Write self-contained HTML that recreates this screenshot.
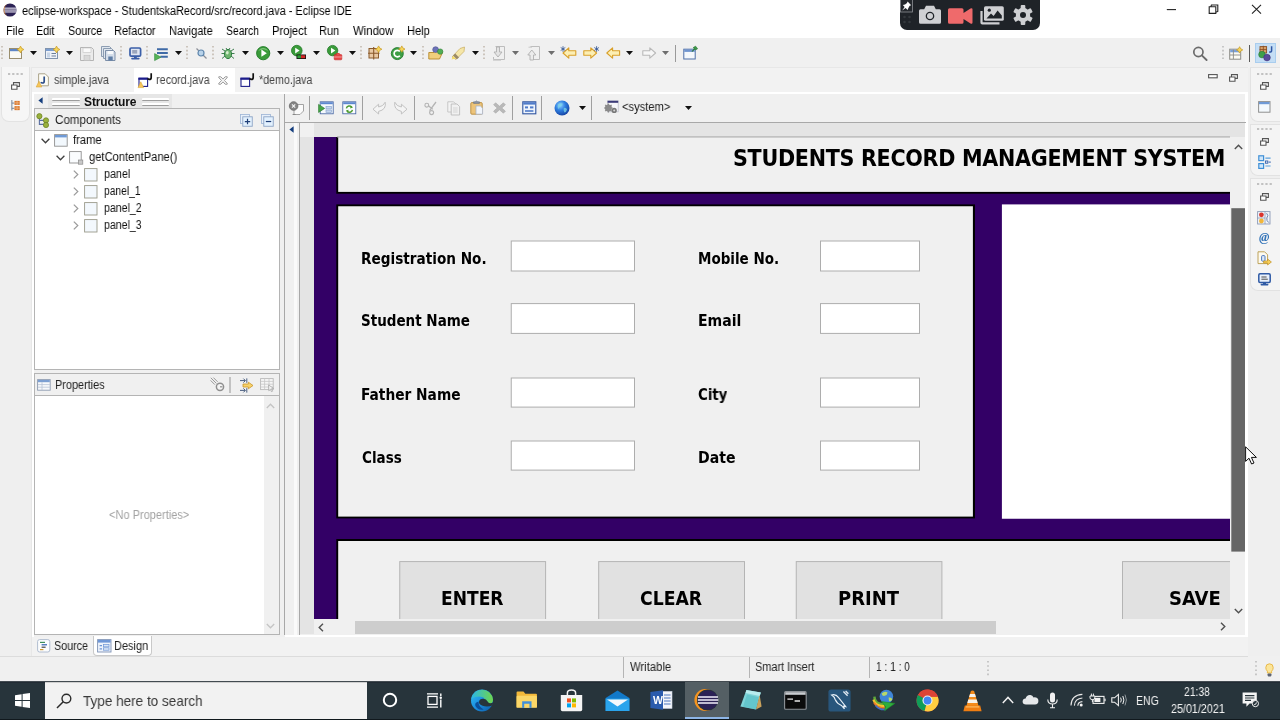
<!DOCTYPE html>
<html lang="en">
<head>
<meta charset="utf-8">
<title>eclipse-workspace - StudentskaRecord/src/record.java - Eclipse IDE</title>
<style>
*{box-sizing:border-box;margin:0;padding:0}
html,body{width:1280px;height:720px;overflow:hidden;background:#fff}
body{position:relative;font-family:"Liberation Sans",sans-serif;font-size:12px;color:#000}
.a{position:absolute}
.t{position:absolute;white-space:nowrap;line-height:1;transform-origin:0 50%;will-change:transform}
.ui{font-family:"Liberation Sans",sans-serif;font-size:12px;color:#1a1a1a}
.tb{font-family:"DejaVu Sans Condensed","DejaVu Sans","Liberation Sans",sans-serif;font-weight:bold;color:#000}
.lbl{font-size:15px}
.fld{position:absolute;background:#fff;border:1px solid #ababab;height:31px}
.btn{position:absolute;background:#e1e1e1;border:1px solid #b6b6b6;height:70px;width:147px}
.btx{font-size:19px}
svg{position:absolute;overflow:visible}
</style>
</head>
<body>
<!-- chrome -->
<div class="a" id="titlebar" style="left:0;top:0;width:1280px;height:21px;background:#fff"></div>
<div class="a" id="menubar" style="left:0;top:21px;width:1280px;height:17px;background:#fff"></div>
<div class="a" id="maintool" style="left:0;top:38px;width:1280px;height:29px;background:#f0f0f0"></div>
<div class="a" id="workbench" style="left:0;top:67px;width:1280px;height:589px;background:#efefef"></div>
<div class="a" id="statusbar" style="left:0;top:656px;width:1280px;height:26px;background:#f0f0f0"></div>
<div class="a" id="taskbar" style="left:0;top:682px;width:1280px;height:38px;background:#27343b"></div>
<!-- title -->
<svg id="eclipseicon" style="left:3px;top:3px" width="14" height="14" viewBox="0 0 14 14"><circle cx="7" cy="7" r="6.6" fill="#2c2255"/><rect x="0.6" y="4.6" width="12.8" height="1.1" fill="#e9e6f2"/><rect x="0.4" y="6.5" width="13.2" height="1.1" fill="#e9e6f2"/><rect x="0.6" y="8.4" width="12.8" height="1.1" fill="#e9e6f2"/><path d="M4 1.2A6.6 6.6 0 0 0 4 12.8A8 8 0 0 1 4 1.2Z" fill="#f7941e" opacity=".55"/></svg>
<div class="t ui" id="wtitle" style="left:21.9px;top:4.8px;font-size:12px;color:#000;transform:scaleX(0.909)">eclipse-workspace - StudentskaRecord/src/record.java - Eclipse IDE</div>
<!-- window buttons -->
<svg style="left:1166px;top:4px" width="12" height="12" viewBox="0 0 12 12"><path d="M0.8 5.6H10" stroke="#222" stroke-width="1.1" fill="none"/></svg>
<svg style="left:1208px;top:4px" width="12" height="12" viewBox="0 0 12 12"><path d="M1.2 2.8H7.8V9.4H1.2ZM2.8 2.8L3.4 1H9.8V7.4L7.8 8.2" stroke="#222" stroke-width="1.1" fill="none"/></svg>
<svg style="left:1251px;top:4px" width="12" height="12" viewBox="0 0 12 12"><path d="M1 0.8L10 9.6M10 0.8L1 9.6" stroke="#222" stroke-width="1.1" fill="none"/></svg>
<!-- recorder widget -->
<div class="a" id="recw" style="left:900px;top:-6px;width:140px;height:35.5px;background:#1f2328;border-radius:7px"></div>
<svg style="left:900px;top:0" width="140" height="30" viewBox="0 0 140 30">
  <rect x="0.5" y="-0.5" width="12" height="12.5" fill="#23272c" stroke="#8d9094" stroke-width="0.8"/>
  <path d="M7.6 1.6L11.2 5.2L9.7 5.7L8.4 7.9L7.6 10L5.6 8L2.2 10.6L4.6 7L2.8 5.1L5 4.4L7 3.1Z" fill="#fff"/>
  <g fill="#33373c"><circle cx="4.5" cy="17" r="1.3"/><circle cx="9.5" cy="17" r="1.3"/><circle cx="4.5" cy="22" r="1.3"/><circle cx="9.5" cy="22" r="1.3"/></g>
  <!-- camera -->
  <path d="M20.5 9.2H24.2L26 5.8H34L35.8 9.2H39.5Q41 9.2 41 10.7V22.2Q41 23.7 39.5 23.7H20.5Q19 23.7 19 22.2V10.7Q19 9.2 20.5 9.2Z" fill="#cfd0d3"/>
  <circle cx="30" cy="16" r="4.3" fill="#1f2328"/><circle cx="30" cy="16" r="3" fill="#cfd0d3"/>
  <!-- video -->
  <path d="M49.5 8.2H62Q63.5 8.2 63.5 9.7V13L70.5 8.6Q72.5 7.6 72.5 9.6V22.4Q72.5 24.4 70.5 23.4L63.5 19V22.2Q63.5 23.7 62 23.7H49.5Q48 23.7 48 22.2V9.7Q48 8.2 49.5 8.2Z" fill="#ef6a6b"/>
  <!-- gallery -->
  <path d="M81.5 11V22.6Q81.5 23.4 82.3 23.4H99.5" fill="none" stroke="#cfd0d3" stroke-width="2.2"/>
  <rect x="84" y="6.2" width="19.8" height="14.6" rx="1.6" fill="#cfd0d3"/>
  <path d="M86.5 18.6L91 13.6L93.6 16L97.6 10.6L101.8 15.6V18.6Z" fill="#1f2328"/><circle cx="89.3" cy="10.2" r="1.6" fill="#1f2328"/>
  <!-- gear -->
  <g transform="translate(123 15)"><g fill="#cfd0d3"><circle r="7.2"/><rect x="-2.3" y="-10" width="4.6" height="20" rx="1"/><rect x="-2.3" y="-10" width="4.6" height="20" rx="1" transform="rotate(60)"/><rect x="-2.3" y="-10" width="4.6" height="20" rx="1" transform="rotate(120)"/></g><circle r="3" fill="#1f2328"/></g>
</svg>
<!-- menu -->
<div class="t ui" id="m1" style="left:6.0px;top:24.8px;color:#000;transform:scaleX(0.919)">File</div>
<div class="t ui" id="m2" style="left:35.6px;top:24.8px;color:#000;transform:scaleX(0.895)">Edit</div>
<div class="t ui" id="m3" style="left:68.0px;top:24.8px;color:#000;transform:scaleX(0.901)">Source</div>
<div class="t ui" id="m4" style="left:114.1px;top:24.8px;color:#000;transform:scaleX(0.918)">Refactor</div>
<div class="t ui" id="m5" style="left:168.8px;top:24.8px;color:#000;transform:scaleX(0.922)">Navigate</div>
<div class="t ui" id="m6" style="left:226.0px;top:24.8px;color:#000;transform:scaleX(0.869)">Search</div>
<div class="t ui" id="m7" style="left:272.2px;top:24.8px;color:#000;transform:scaleX(0.933)">Project</div>
<div class="t ui" id="m8" style="left:319.4px;top:24.8px;color:#000;transform:scaleX(0.918)">Run</div>
<div class="t ui" id="m9" style="left:353.1px;top:24.8px;color:#000;transform:scaleX(0.946)">Window</div>
<div class="t ui" id="m10" style="left:407.0px;top:24.8px;color:#000;transform:scaleX(0.922)">Help</div>
<!-- toolbar -->
<svg style="left:1px;top:46px" width="2" height="15" viewBox="0 0 2 15"><path d="M1 0V15" stroke="#bdb2a6" stroke-width="1.4" stroke-dasharray="1.6 2.2" fill="none"/></svg>
<svg style="left:9px;top:46px" width="15" height="15" viewBox="0 0 15 15"><rect x="0.5" y="2.5" width="12" height="10" fill="#fbfaf3" stroke="#9a8e6e"/><rect x="1" y="3" width="11" height="2.2" fill="#5f86c5"/><path d="M11.5 0.10000000000000009L12.69 2.31L14.9 3.5L12.69 4.6899999999999995L11.5 6.9L10.31 4.6899999999999995L8.1 3.5L10.31 2.31Z" fill="#f6d55c" stroke="#c99a1f" stroke-width="0.7"/></svg>
<svg style="left:29.9px;top:50.6px" width="7" height="4" viewBox="0 0 7 4"><path d="M0 0H7L3.5 4Z" fill="#111"/></svg>
<svg style="left:45px;top:46px" width="15" height="15" viewBox="0 0 15 15"><rect x="0.5" y="2.5" width="12" height="10" fill="#eef2f8" stroke="#8093ad"/><rect x="1" y="3" width="11" height="2" fill="#7c9ed0"/><rect x="2" y="6.5" width="3" height="5" fill="#c7d5e8"/><path d="M6.5 7.5H11M6.5 10H11" stroke="#6c7f99" stroke-width="1"/><path d="M11.5 0.10000000000000009L12.69 2.31L14.9 3.5L12.69 4.6899999999999995L11.5 6.9L10.31 4.6899999999999995L8.1 3.5L10.31 2.31Z" fill="#f6d55c" stroke="#c99a1f" stroke-width="0.7"/></svg>
<svg style="left:65.5px;top:50.6px" width="7" height="4" viewBox="0 0 7 4"><path d="M0 0H7L3.5 4Z" fill="#111"/></svg>
<svg style="left:80px;top:46.5px" width="14" height="14" viewBox="0 0 14 14"><path d="M0.5 0.5H11.5L13.5 2.5V13.5H0.5Z" fill="#ececec" stroke="#b4b4b4"/><rect x="3" y="1" width="8" height="4.5" fill="#fafafa" stroke="#c4c4c4" stroke-width=".6"/><rect x="4" y="8.5" width="6" height="5" fill="#d9d9d9" stroke="#bcbcbc" stroke-width=".6"/></svg>
<svg style="left:101px;top:46px" width="15" height="15" viewBox="0 0 15 15"><path d="M0.5 0.5H8.5L10 2V10.5H0.5Z" fill="#dfe6ee" stroke="#8d9db2"/><path d="M2.5 2.5H10.5L12 4V12.5H2.5Z" fill="#dfe6ee" stroke="#8d9db2"/><path d="M4.5 4.5H12.5L14 6V14.5H4.5Z" fill="#d5deea" stroke="#7d8fa8"/><rect x="6.5" y="5" width="5.5" height="3" fill="#f7f9fb"/><rect x="7.3" y="10.5" width="4.4" height="4" fill="#5f7ea6"/></svg>
<svg style="left:120px;top:46px" width="2" height="15" viewBox="0 0 2 15"><path d="M1 0V15" stroke="#bdb2a6" stroke-width="1.4" stroke-dasharray="1.6 2.2" fill="none"/></svg>
<svg style="left:128.5px;top:46.5px" width="13" height="13" viewBox="0 0 13 13"><rect x="1" y="1" width="10.6" height="8.2" rx="1.2" fill="#dfe6f2" stroke="#3b5fa8" stroke-width="1.7"/><rect x="3.2" y="3" width="5" height="3.6" fill="#9aa6bd"/><rect x="5" y="9.6" width="2.8" height="1.6" fill="#3b5fa8"/><rect x="2.2" y="10.8" width="8.4" height="1.7" rx=".8" fill="#3b5fa8"/></svg>
<svg style="left:146px;top:46px" width="2" height="15" viewBox="0 0 2 15"><path d="M1 0V15" stroke="#bdb2a6" stroke-width="1.4" stroke-dasharray="1.6 2.2" fill="none"/></svg>
<svg style="left:154px;top:46.5px" width="15" height="14" viewBox="0 0 15 14"><path d="M3 2.2H13.8M3 6H13.8M6.4 9.8H13.8" stroke="#3f6aa6" stroke-width="2"/><path d="M0.6 6.6L7 10.2L0.6 13.6Z" fill="#56b356" stroke="#2e8a3a" stroke-width=".6"/></svg>
<svg style="left:174.8px;top:50.6px" width="7" height="4" viewBox="0 0 7 4"><path d="M0 0H7L3.5 4Z" fill="#111"/></svg>
<svg style="left:186px;top:46px" width="2" height="15" viewBox="0 0 2 15"><path d="M1 0V15" stroke="#bdb2a6" stroke-width="1.4" stroke-dasharray="1.6 2.2" fill="none"/></svg>
<svg style="left:196px;top:48px" width="11" height="11" viewBox="0 0 11 11"><path d="M0.5 0.5L10.5 10.5" stroke="#8b8f98" stroke-width="1.2"/><circle cx="5" cy="5" r="3" fill="#b9d3ea" stroke="#5e86ad" stroke-width="1.2"/></svg>
<svg style="left:212.4px;top:46px" width="2" height="15" viewBox="0 0 2 15"><path d="M1 0V15" stroke="#bdb2a6" stroke-width="1.4" stroke-dasharray="1.6 2.2" fill="none"/></svg>
<svg style="left:221px;top:46px" width="14" height="14" viewBox="0 0 14 14"><g stroke="#3f7f4f" stroke-width="1" fill="none"><path d="M1 3L4 5M13 3L10 5M0.5 7.5H3.5M13.5 7.5H10.5M1 12.5L4 10M13 12.5L10 10M5 2L6 3.5M9 2L8 3.5"/></g><ellipse cx="7" cy="8" rx="3.6" ry="4.6" fill="#6fb56f" stroke="#2e7d42"/><ellipse cx="6.3" cy="6.8" rx="1.4" ry="1.8" fill="#d6efd0"/></svg>
<svg style="left:241.5px;top:50.6px" width="7" height="4" viewBox="0 0 7 4"><path d="M0 0H7L3.5 4Z" fill="#111"/></svg>
<svg style="left:256px;top:46px" width="15" height="15" viewBox="0 0 15 15"><circle cx="7.2" cy="7.2" r="6.6" fill="#3a9b3a" stroke="#1f7a26" stroke-width=".9"/><path d="M2.4 5A5.4 5.4 0 0 1 12 5A8 8 0 0 0 2.4 5Z" fill="#8fd18a" opacity=".8"/><path d="M5.4 3.6L10.8 7.2L5.4 10.8Z" fill="#fff"/></svg>
<svg style="left:276.8px;top:50.6px" width="7" height="4" viewBox="0 0 7 4"><path d="M0 0H7L3.5 4Z" fill="#111"/></svg>
<svg style="left:291px;top:44.5px" width="16" height="15" viewBox="0 0 16 15"><circle cx="5.8" cy="5.6" r="5.3" fill="#3a9b3a" stroke="#1f7a26" stroke-width=".8"/><path d="M4.2 2.8L8.6 5.6L4.2 8.4Z" fill="#fff"/><rect x="5.5" y="9.5" width="9.5" height="4.5" fill="#111"/><rect x="6.3" y="10.3" width="3.6" height="2.9" fill="#2fa23a"/><rect x="10" y="10.3" width="4.2" height="2.9" fill="#d32525"/></svg>
<svg style="left:312.8px;top:50.6px" width="7" height="4" viewBox="0 0 7 4"><path d="M0 0H7L3.5 4Z" fill="#111"/></svg>
<svg style="left:327px;top:44.5px" width="17" height="16" viewBox="0 0 17 16"><circle cx="5.6" cy="5.6" r="5.2" fill="#3a9b3a" stroke="#1f7a26" stroke-width=".8"/><path d="M4 2.8L8.4 5.6L4 8.4Z" fill="#fff"/><path d="M9.4 9.6V8.6H12.4V9.6" fill="none" stroke="#d33" stroke-width="1"/><rect x="7.2" y="9.6" width="7.6" height="5.2" rx=".8" fill="#e54545" stroke="#c62828" stroke-width=".6"/><path d="M7.2 12H14.8" stroke="#f7b5b5" stroke-width=".8"/></svg>
<svg style="left:348.5px;top:50.6px" width="7" height="4" viewBox="0 0 7 4"><path d="M0 0H7L3.5 4Z" fill="#111"/></svg>
<svg style="left:359.7px;top:46px" width="2" height="15" viewBox="0 0 2 15"><path d="M1 0V15" stroke="#bdb2a6" stroke-width="1.4" stroke-dasharray="1.6 2.2" fill="none"/></svg>
<svg style="left:368px;top:46px" width="14" height="14" viewBox="0 0 14 14"><rect x="1" y="2.5" width="9.5" height="9.5" fill="#e9c9a4" stroke="#8a5a2b" stroke-width="1"/><path d="M5.7 1V13.5M0 7.2H11.5" stroke="#8a5a2b" stroke-width="1.1"/><path d="M10.6 -0.09999999999999964L11.754999999999999 2.0450000000000004L13.899999999999999 3.2L11.754999999999999 4.355L10.6 6.5L9.445 4.355L7.3 3.2L9.445 2.0450000000000004Z" fill="#f6d55c" stroke="#c99a1f" stroke-width="0.7"/></svg>
<svg style="left:391px;top:46px" width="14" height="14" viewBox="0 0 14 14"><circle cx="6.3" cy="7.6" r="6" fill="#3d9e45" stroke="#237a2d" stroke-width=".9"/><path d="M8.9 5.4A3.3 3.3 0 1 0 8.9 9.8" fill="none" stroke="#fff" stroke-width="1.7"/><path d="M10.8 -0.10000000000000009L11.92 1.9800000000000002L14.0 3.1L11.92 4.22L10.8 6.300000000000001L9.680000000000001 4.22L7.6000000000000005 3.1L9.680000000000001 1.9800000000000002Z" fill="#f6d55c" stroke="#c99a1f" stroke-width="0.7"/></svg>
<svg style="left:410.3px;top:50.6px" width="7" height="4" viewBox="0 0 7 4"><path d="M0 0H7L3.5 4Z" fill="#111"/></svg>
<svg style="left:421.6px;top:46px" width="2" height="15" viewBox="0 0 2 15"><path d="M1 0V15" stroke="#bdb2a6" stroke-width="1.4" stroke-dasharray="1.6 2.2" fill="none"/></svg>
<svg style="left:428px;top:46px" width="16" height="14" viewBox="0 0 16 14"><path d="M0.8 6.5H6L8 4.5H13L14.5 6.5L11.5 13H0.8Z" fill="#f0cf7c" stroke="#b5892a" stroke-width=".9"/><circle cx="7.6" cy="3.6" r="2.9" fill="#6c73b8" stroke="#4a4f8e" stroke-width=".6"/><circle cx="12.2" cy="5.6" r="2.7" fill="#4fae55" stroke="#2f7f38" stroke-width=".6"/></svg>
<svg style="left:451px;top:46px" width="15" height="14" viewBox="0 0 15 14"><path d="M1 11L9 2.5L13.5 1L13 5.5L5 13.5Z" fill="#f5e6a8" stroke="#cbb36a" stroke-width=".8"/><path d="M4.2 7.5L8 11.4L5.8 13.2L2 9.5Z" fill="#9a8a6a"/><path d="M0.5 13.5L2.2 10.2L4.6 12.6Z" fill="#f6dd66"/></svg>
<svg style="left:472.0px;top:50.6px" width="7" height="4" viewBox="0 0 7 4"><path d="M0 0H7L3.5 4Z" fill="#111"/></svg>
<svg style="left:483.4px;top:46px" width="2" height="15" viewBox="0 0 2 15"><path d="M1 0V15" stroke="#bdb2a6" stroke-width="1.4" stroke-dasharray="1.6 2.2" fill="none"/></svg>
<svg style="left:492px;top:45.5px" width="14" height="15" viewBox="0 0 14 15"><path d="M3.5 0.5H12.5V13.5H1.5V11" fill="#f0f0f0" stroke="#bdbdbd"/><path d="M4.5 1V6H2L6 11L10 6H7.5V1Z" fill="#e4e4e4" stroke="#b0b0b0" stroke-width=".9"/><path d="M1 14.2H9" stroke="#c8c8c8"/></svg>
<svg style="left:512.2px;top:50.6px" width="7" height="4" viewBox="0 0 7 4"><path d="M0 0H7L3.5 4Z" fill="#6e6e6e"/></svg>
<svg style="left:527px;top:45.5px" width="14" height="15" viewBox="0 0 14 15"><path d="M3.5 0.5H12.5V13.5H5" fill="#f0f0f0" stroke="#bdbdbd"/><path d="M3 14V9H0.8L4.8 4L8.8 9H6.5V14Z" fill="#ececec" stroke="#b0b0b0" stroke-width=".9"/><path d="M1.5 1.2H5" stroke="#c8c8c8"/></svg>
<svg style="left:547.8px;top:50.6px" width="7" height="4" viewBox="0 0 7 4"><path d="M0 0H7L3.5 4Z" fill="#6e6e6e"/></svg>
<svg style="left:561px;top:46px" width="16" height="14" viewBox="0 0 16 14"><path d="M2.0 7L7.8 1.8V4.8H14.799999999999999V9.2H7.8V12.2Z" fill="#fcefb4" stroke="#d9a02a" stroke-width="1.1" stroke-linejoin="round"/><path d="M2 0.20000000000000018V5.8M-0.2999999999999998 1.5L4.3 4.5M-0.2999999999999998 4.5L4.3 1.5" stroke="#2c4f8f" stroke-width=".8"/></svg>
<svg style="left:583px;top:46px" width="16" height="14" viewBox="0 0 16 14"><path d="M13.6 7L7.8 1.8V4.8H0.8V9.2H7.8V12.2Z" fill="#fcefb4" stroke="#d9a02a" stroke-width="1.1" stroke-linejoin="round"/><path d="M13.6 0.20000000000000018V5.8M11.3 1.5L15.899999999999999 4.5M11.3 4.5L15.899999999999999 1.5" stroke="#2c4f8f" stroke-width=".8"/></svg>
<svg style="left:605.5px;top:46px" width="15" height="14" viewBox="0 0 15 14"><path d="M0.8 7L6.6 1.8V4.8H13.6V9.2H6.6V12.2Z" fill="#fcefb4" stroke="#d9a02a" stroke-width="1.1" stroke-linejoin="round"/></svg>
<svg style="left:626.2px;top:50.6px" width="7" height="4" viewBox="0 0 7 4"><path d="M0 0H7L3.5 4Z" fill="#111"/></svg>
<svg style="left:641.5px;top:46px" width="15" height="14" viewBox="0 0 15 14"><path d="M13.6 7L7.8 1.8V4.8H0.8V9.2H7.8V12.2Z" fill="#f7f7f7" stroke="#b9b9b9" stroke-width="1.1" stroke-linejoin="round"/></svg>
<svg style="left:662.2px;top:50.6px" width="7" height="4" viewBox="0 0 7 4"><path d="M0 0H7L3.5 4Z" fill="#6e6e6e"/></svg>
<div class="a" style="left:674.5px;top:45px;width:1px;height:17px;background:#9a9a9a"></div>
<svg style="left:683px;top:46px" width="15" height="14" viewBox="0 0 15 14"><rect x="0.8" y="3.2" width="11.4" height="9.8" fill="#f4f8fc" stroke="#4d6fa8" stroke-width="1"/><rect x="1.2" y="3.6" width="10.6" height="2.3" fill="#6f94cf"/><path d="M9 5.6L11.2 2.4L10.2 1.6L12.6 0.2L14.6 2.8L12.4 4L11.8 3.2Z" fill="#3d9a48" stroke="#23702d" stroke-width=".6"/></svg>
<svg style="left:1192px;top:45px" width="17" height="17" viewBox="0 0 17 17"><circle cx="6.4" cy="7" r="4.6" fill="none" stroke="#6b6b6b" stroke-width="1.7"/><path d="M9.8 10.4L14.6 15" stroke="#6b6b6b" stroke-width="1.9" stroke-linecap="round"/></svg>
<svg style="left:1222px;top:46px" width="2" height="15" viewBox="0 0 2 15"><path d="M1 0V15" stroke="#b5b5b5" stroke-width="1.4" stroke-dasharray="1.6 2.2" fill="none"/></svg>
<svg style="left:1229px;top:46.5px" width="14" height="13" viewBox="0 0 14 13"><rect x="0.7" y="2.2" width="11" height="10" fill="#fdfcf4" stroke="#8b8b86" stroke-width="1"/><rect x="1.2" y="2.7" width="10" height="2.6" fill="#7ba0d8"/><path d="M4.4 2.7V12M1 8H11.6" stroke="#8b8b86" stroke-width=".9"/><path d="M10.6 -0.30000000000000027L11.719999999999999 1.78L13.8 2.9L11.719999999999999 4.02L10.6 6.1L9.48 4.02L7.3999999999999995 2.9L9.48 1.78Z" fill="#f6d55c" stroke="#c99a1f" stroke-width="0.7"/></svg>
<div class="a" style="left:1249px;top:45px;width:1px;height:17px;background:#5a5a5a"></div>
<div class="a" style="left:1255px;top:43px;width:21px;height:20px;background:#c4def5;border:1px solid #a9cdee"></div>
<svg style="left:1257px;top:45px" width="18" height="17" viewBox="0 0 18 17"><rect x="3" y="1.6" width="6.6" height="6.4" fill="#d9a26c" stroke="#8a4f22" stroke-width=".9"/><path d="M6.3 0.8V8.4M2.6 4.6H10" stroke="#8a4f22" stroke-width=".9"/><path d="M14.6 1.2V5.4Q14.6 7.4 12.2 7" fill="none" stroke="#2e55a3" stroke-width="1.5"/><circle cx="5" cy="9.6" r="3.3" fill="#3f9f4b" stroke="#2a7a35" stroke-width=".6"/><circle cx="10" cy="12.6" r="3.3" fill="#5a4a9c" stroke="#3e3278" stroke-width=".6"/></svg>
<!-- editor -->
<!-- left trim strip -->
<div class="a" style="left:1px;top:67px;width:29px;height:55px;background:#f6f6f6;border:1px solid #e3e3e3;border-top:none;border-radius:0 0 8px 8px"></div>
<svg style="left:8px;top:73px" width="16" height="2" viewBox="0 0 16 2"><path d="M0 1H16" stroke="#8d8d8d" stroke-width="1.2" stroke-dasharray="2.2 2" fill="none"/></svg>
<svg style="left:10.5px;top:81.5px" width="9" height="8" viewBox="0 0 9 8"><path d="M2.5 0.6H8.4V4.4H2.5Z" fill="#fff" stroke="#555" stroke-width="1.1"/><path d="M0.6 3H6V7.2H0.6Z" fill="#fff" stroke="#555" stroke-width="1.1"/></svg>
<svg style="left:11px;top:100.3px" width="9.6" height="11.4" viewBox="0 0 11 13"><path d="M1 0V12M1 3.5H4M1 9.5H4" stroke="#6f7f95" stroke-width="1.1" fill="none"/><rect x="4" y="1" width="6" height="4.6" fill="#d9762b"/><rect x="4" y="7" width="6" height="4.6" fill="#d9762b"/><path d="M4 3.3H10M4 9.3H10M7 1V5.6M7 7V11.6" stroke="#f3c59a" stroke-width=".7"/></svg>
<!-- editor stack frame -->
<div class="a" style="left:31px;top:67px;width:1px;height:589px;background:#e7e7e7"></div>
<div class="a" id="edframe" style="left:32px;top:67px;width:1216px;height:590px;background:#f0f0f0;border-left:2px solid #fff"></div>
<div class="a" id="tabrow" style="left:32px;top:67px;width:1216px;height:25px;background:#f2f2f2;border-top:1px solid #e7e7e7"></div>
<div class="a" style="left:32px;top:92px;width:1216px;height:2px;background:#fff"></div>
<div class="a" style="left:1245px;top:94px;width:3px;height:543px;background:#fff"></div>
<div class="a" style="left:285px;top:635px;width:963px;height:2px;background:#fff"></div>
<div class="a" id="activetab" style="left:133.5px;top:67.5px;width:101.5px;height:26px;background:#fff"></div>
<!-- tab icons -->
<svg style="left:36px;top:72.5px" width="13" height="15" viewBox="0 0 13 15"><path d="M2.6 0.8H9.2L12.4 4V12.8H2.6Z" fill="#fdfcf6" stroke="#a39b7f" stroke-width=".9"/><path d="M8.2 3.6V8.2Q8.2 10 6.4 10Q5.4 10 4.8 9.2" fill="none" stroke="#2d4e8a" stroke-width="1.7"/><path d="M0.2 14L3 8.2L5.8 14Z" fill="#f7c65a" stroke="#d9a63a" stroke-width=".6"/></svg>
<div class="t ui" id="tab1" style="left:53.5px;top:74.0px;color:#444;transform:scaleX(0.917)">simple.java</div>
<svg style="left:138px;top:73px" width="15" height="15" viewBox="0 0 15 15"><rect x="1" y="5.4" width="8.6" height="8" fill="#fff" stroke="#20208a" stroke-width="1.1"/><rect x="0.4" y="4.6" width="9.8" height="2.2" fill="#1c1c8c"/><path d="M13.2 0.2V4.4Q13.2 6.4 11.2 6.4Q10 6.4 9.4 5.6" fill="none" stroke="#111" stroke-width="1.7"/><path d="M0 14.6L2.8 8.8L5.6 14.6Z" fill="#f7c65a" stroke="#d9a63a" stroke-width=".6"/></svg>
<div class="t ui" id="tab2" style="left:156.4px;top:74.0px;color:#444;transform:scaleX(0.904)">record.java</div>
<svg style="left:218px;top:76px" width="10" height="9" viewBox="0 0 10 9"><path d="M0.8 0.8H2.8L5 3.2L7.2 0.8H9.2V1.6L6.4 4.5L9.2 7.4V8.2H7.2L5 5.8L2.8 8.2H0.8V7.4L3.6 4.5L0.8 1.6Z" fill="#fff" stroke="#8a8a8a" stroke-width=".9"/></svg>
<svg style="left:239.5px;top:73px" width="15" height="15" viewBox="0 0 15 15"><rect x="1" y="5.4" width="8.6" height="8" fill="#fff" stroke="#20208a" stroke-width="1.1"/><rect x="0.4" y="4.6" width="9.8" height="2.2" fill="#1c1c8c"/><path d="M13.2 0.2V4.4Q13.2 6.4 11.2 6.4Q10 6.4 9.4 5.6" fill="none" stroke="#111" stroke-width="1.7"/></svg>
<div class="t ui" id="tab3" style="left:258.6px;top:74.0px;color:#444;transform:scaleX(0.890)">*demo.java</div>
<!-- min / max of editor stack -->
<svg style="left:1208px;top:74px" width="10" height="5" viewBox="0 0 10 5"><rect x="0.6" y="0.6" width="8.6" height="3.2" fill="#fff" stroke="#555" stroke-width="1.1"/></svg>
<svg style="left:1229px;top:74px" width="9" height="8" viewBox="0 0 9 8"><path d="M2.5 0.6H8.4V4.4H2.5Z" fill="#fff" stroke="#555" stroke-width="1.1"/><path d="M0.6 3H6V7.2H0.6Z" fill="#fff" stroke="#555" stroke-width="1.1"/></svg>
<!-- design toolbar (palette/actions) -->
<div class="a" style="left:284px;top:94px;width:1px;height:541px;background:#a8a8a8"></div>
<div class="a" style="left:285px;top:122px;width:961px;height:1px;background:#a8a8a8"></div>
<div class="a" style="left:298.5px;top:122px;width:1px;height:513px;background:#a8a8a8"></div>
<div class="a" style="left:294px;top:123px;width:3px;height:512px;background:#fafafa"></div>
<svg style="left:288.5px;top:126px" width="5" height="7" viewBox="0 0 5 7"><path d="M4.6 0.2V6.8L0.4 3.5Z" fill="#153e7e"/></svg>
<!-- dtool -->
<svg style="left:288.5px;top:100.5px" width="16" height="15" viewBox="0 0 16 15"><path d="M5 3.5H14.5V10L11 13.5H5Z" fill="#fbfbfb" stroke="#9a9a9a" stroke-width=".9"/><circle cx="4.6" cy="5" r="4.3" fill="#858585" stroke="#6a6a6a" stroke-width=".8"/><path d="M3 3.4L6.2 6.6M6.2 3.4L3 6.6" stroke="#f4f4f4" stroke-width="1.2"/><path d="M3.6 13.5H6.6" stroke="#888" stroke-width="1"/></svg>
<div class="a" style="left:309.0px;top:96px;width:1px;height:24px;background:#a0a0a0"></div>
<svg style="left:318px;top:100.5px" width="16" height="14" viewBox="0 0 16 14"><rect x="2.2" y="0.8" width="13" height="12" fill="#f4f8fd" stroke="#3f5f9f" stroke-width=".8"/><rect x="2.6" y="1.2" width="12.2" height="2" fill="#5c87cf"/><rect x="8" y="5.5" width="5.4" height="2.4" fill="#c5d5ee" stroke="#7f9cc8" stroke-width=".6"/><rect x="8" y="9" width="5.4" height="2.4" fill="#c5d5ee" stroke="#7f9cc8" stroke-width=".6"/><path d="M0.6 3.4L6.6 7.4L0.6 11.4Z" fill="#46a546" stroke="#2d7d33" stroke-width=".7"/></svg>
<svg style="left:341.5px;top:100.5px" width="15" height="14" viewBox="0 0 15 14"><rect x="0.8" y="0.8" width="13" height="12" fill="#fbfdff" stroke="#3f5f9f" stroke-width=".8"/><rect x="1.2" y="1.2" width="12.2" height="2" fill="#5c87cf"/><path d="M4.4 7.4A3 3 0 0 1 9.8 6.2M10.4 8.8A3 3 0 0 1 5 10" fill="none" stroke="#4c9a2f" stroke-width="1.5"/><path d="M8.6 4.6L11 6.6L8.2 7.4ZM6 11.6L3.8 9.6L6.6 8.8Z" fill="#4c9a2f"/></svg>
<div class="a" style="left:361.8px;top:96px;width:1px;height:24px;background:#a0a0a0"></div>
<svg style="left:371.5px;top:100.5px" width="15" height="14" viewBox="0 0 15 14"><path d="M1 8.2L6.6 3.2V6Q11.4 5.4 13.2 1.2Q14.6 8.6 6.6 10.4V13Z" fill="#f4f4f4" stroke="#c2c2c2" stroke-width="1" stroke-linejoin="round"/></svg>
<svg style="left:393px;top:100.5px" width="15" height="14" viewBox="0 0 15 14"><path d="M14 8.2L8.4 3.2V6Q3.6 5.4 1.8 1.2Q0.4 8.6 8.4 10.4V13Z" fill="#f4f4f4" stroke="#c2c2c2" stroke-width="1" stroke-linejoin="round"/></svg>
<div class="a" style="left:413.7px;top:96px;width:1px;height:24px;background:#a0a0a0"></div>
<svg style="left:424px;top:100.5px" width="14" height="15" viewBox="0 0 14 15"><path d="M12 1L5.6 9.6M4 4.4L8.8 8.2" stroke="#b4b4b4" stroke-width="1.3" fill="none"/><circle cx="2.8" cy="4.2" r="1.9" fill="none" stroke="#b4b4b4" stroke-width="1.1"/><circle cx="7.6" cy="11.6" r="2" fill="none" stroke="#b4b4b4" stroke-width="1.1"/></svg>
<svg style="left:446.5px;top:100.5px" width="14" height="15" viewBox="0 0 14 15"><path d="M0.8 0.8H6.6L8.6 2.8V11H0.8Z" fill="#f4f4f4" stroke="#c2c2c2" stroke-width=".9"/><path d="M4.2 3H10L12.6 5.6V14H4.2Z" fill="#f1f1f1" stroke="#bcbcbc" stroke-width=".9"/><path d="M6 7H10.6M6 9H10.6M6 11H10.6" stroke="#cfcfcf" stroke-width=".8"/></svg>
<svg style="left:469.5px;top:100px" width="14" height="15" viewBox="0 0 14 15"><rect x="0.8" y="2.6" width="11.4" height="11.6" rx="1" fill="#edc47a" stroke="#b98d3e" stroke-width=".9"/><path d="M3.6 3.4V1.8H5.2Q6.4 0 7.8 1.8H9.4V3.4Z" fill="#8e97a6" stroke="#6c7585" stroke-width=".6"/><path d="M6 6H10.4L12.6 8.2V14.2H6Z" fill="#f1f5fb" stroke="#a9b4c6" stroke-width=".8"/></svg>
<svg style="left:493px;top:101.5px" width="13" height="12" viewBox="0 0 13 12"><path d="M2.6 0.8L6.5 4.2L10.4 0.8L12.4 2.8L8.8 6L12.4 9.2L10.4 11.2L6.5 7.8L2.6 11.2L0.6 9.2L4.2 6L0.6 2.8Z" fill="#b9b9b9" stroke="#a7a7a7" stroke-width=".6"/></svg>
<div class="a" style="left:511.9px;top:96px;width:1px;height:24px;background:#a0a0a0"></div>
<svg style="left:522px;top:100.5px" width="15" height="14" viewBox="0 0 15 14"><rect x="0.8" y="0.8" width="13" height="12" fill="#eef4fc" stroke="#2f55a0" stroke-width="1.1"/><rect x="1.2" y="1.2" width="12.2" height="2.4" fill="#4f7bc9"/><rect x="3" y="5.4" width="3" height="2" fill="#4f7bc9"/><rect x="8" y="5.4" width="3.4" height="2" fill="#4f7bc9"/><path d="M3 10H11.4" stroke="#4f7bc9" stroke-width="1.6"/></svg>
<div class="a" style="left:541.2px;top:96px;width:1px;height:24px;background:#a0a0a0"></div>
<svg style="left:554px;top:99.5px" width="16" height="16" viewBox="0 0 16 16"><defs><radialGradient id="gl" cx=".38" cy=".32" r=".75"><stop offset="0" stop-color="#8fd0ff"/><stop offset=".45" stop-color="#2f7fe0"/><stop offset="1" stop-color="#123c9c"/></radialGradient></defs><circle cx="8" cy="8" r="7.5" fill="url(#gl)"/><path d="M4 4.4Q6.4 2.6 8.6 3.6Q9 5.6 6.8 6.6Q5 7.4 4.6 9.2Q3 7.4 4 4.4ZM9.8 8Q12.4 7.4 13 9.4Q12.4 12 10.4 12.6Q9 10.6 9.8 8Z" fill="#7fd6e6" opacity=".75"/></svg>
<svg style="left:578.8px;top:105.5px" width="7" height="4" viewBox="0 0 7 4"><path d="M0 0H7L3.5 4Z" fill="#111"/></svg>
<div class="a" style="left:590.8px;top:96px;width:1px;height:24px;background:#a0a0a0"></div>
<svg style="left:603.5px;top:100px" width="15" height="14" viewBox="0 0 15 14"><rect x="3.6" y="0.8" width="10.6" height="11" fill="#f6f6fa" stroke="#bfc0cc" stroke-width=".8"/><rect x="3.6" y="0.8" width="10.6" height="2" fill="#3b3a78"/><circle cx="4.4" cy="8" r="3.5" fill="#8a8a8a"/><circle cx="4.4" cy="8" r="1.3" fill="#dcdcdc"/><circle cx="10.2" cy="10.4" r="2.6" fill="#777"/><circle cx="10.2" cy="10.4" r="1" fill="#d5d5d5"/><path d="M4.4 3.4V12.6M0 8H8.8M1.2 4.8L7.6 11.2M7.6 4.8L1.2 11.2" stroke="#8a8a8a" stroke-width="1.2"/></svg>
<div class="t ui" id="systxt" style="left:622.2px;top:101.2px;color:#222;transform:scaleX(0.93)">&lt;system&gt;</div>
<svg style="left:684.5px;top:105.5px" width="7" height="4" viewBox="0 0 7 4"><path d="M0 0H7L3.5 4Z" fill="#111"/></svg>
<!-- left -->
<!-- Structure header -->
<svg style="left:38px;top:97px" width="5" height="7" viewBox="0 0 5 7"><path d="M4.6 0.2V6.8L0.4 3.5Z" fill="#153e7e"/></svg>
<div class="a" style="left:48px;top:94px;width:124px;height:14.5px;background:#e6e6e6"></div>
<div class="a" style="left:52px;top:98px;width:28px;height:2px;background:#fff;border-bottom:1px solid #9c9c9c;height:3px;border-radius:1px"></div>
<div class="a" style="left:52px;top:102.5px;width:28px;height:3px;background:#fff;border-bottom:1px solid #9c9c9c;border-radius:1px"></div>
<div class="a" style="left:142px;top:98px;width:27px;height:3px;background:#fff;border-bottom:1px solid #9c9c9c;border-radius:1px"></div>
<div class="a" style="left:142px;top:102.5px;width:27px;height:3px;background:#fff;border-bottom:1px solid #9c9c9c;border-radius:1px"></div>
<div class="t ui" id="structure" style="left:84.3px;top:95.7px;font-weight:bold;color:#111;letter-spacing:-0.1px">Structure</div>
<!-- Components panel -->
<div class="a" style="left:34px;top:108px;width:246px;height:262px;background:#fff;border:1px solid #b4b4b4"></div>
<div class="a" style="left:35px;top:109px;width:244px;height:22px;background:#f0f0f0;border-bottom:1px solid #b4b4b4"></div>
<svg style="left:36px;top:112.5px" width="14" height="15" viewBox="0 0 14 15"><path d="M3.4 3.4V11.4H8.6M3.4 7.4H8.6" stroke="#5a6fa0" stroke-width="1.1" fill="none"/><circle cx="3.4" cy="3.2" r="2.6" fill="#9ab13c" stroke="#6d8424" stroke-width=".8"/><circle cx="10" cy="7.4" r="2.6" fill="#9ab13c" stroke="#6d8424" stroke-width=".8"/><circle cx="10" cy="12" r="2.6" fill="#9ab13c" stroke="#6d8424" stroke-width=".8"/></svg>
<div class="t ui" id="components" style="left:54.8px;top:114.1px;color:#222;transform:scaleX(0.97)">Components</div>
<svg style="left:240px;top:113.8px" width="13" height="13" viewBox="0 0 14 14"><rect x="0.6" y="0.6" width="9.6" height="9.6" fill="#e8f0fa" stroke="#9fb6d6" stroke-width=".9"/><rect x="3" y="3" width="10.2" height="10.2" fill="#e3f1fe" stroke="#8fa6c6" stroke-width="1"/><path d="M8.1 5.2V11M5.2 8.1H11" stroke="#1f3f78" stroke-width="1.3"/></svg>
<svg style="left:261px;top:113.8px" width="13" height="13" viewBox="0 0 14 14"><rect x="0.6" y="0.6" width="9.6" height="9.6" fill="#e8f0fa" stroke="#9fb6d6" stroke-width=".9"/><rect x="3" y="3" width="10.2" height="10.2" fill="#e3f1fe" stroke="#8fa6c6" stroke-width="1"/><path d="M5.2 8.1H11" stroke="#1f3f78" stroke-width="1.3"/></svg>
<!-- tree -->
<svg style="left:41px;top:137.5px" width="9" height="6" viewBox="0 0 9 6"><path d="M0.6 0.8L4.5 4.8L8.4 0.8" fill="none" stroke="#404040" stroke-width="1.3"/></svg>
<svg style="left:54px;top:134px" width="14" height="13" viewBox="0 0 14 13"><rect x="0.6" y="0.6" width="12.6" height="11.6" fill="#f2f8fd" stroke="#8f8f8f" stroke-width=".9"/><rect x="1" y="1" width="11.8" height="2.4" fill="#6f9ad6"/></svg>
<div class="t ui" id="tr1" style="left:73.0px;top:133.9px;color:#111;transform:scaleX(0.935)">frame</div>
<svg style="left:56px;top:154.5px" width="9" height="6" viewBox="0 0 9 6"><path d="M0.6 0.8L4.5 4.8L8.4 0.8" fill="none" stroke="#404040" stroke-width="1.3"/></svg>
<svg style="left:69px;top:151px" width="15" height="14" viewBox="0 0 15 14"><rect x="0.6" y="0.6" width="11.6" height="11.4" fill="#fafcfe" stroke="#8f8f8f" stroke-width=".9"/><rect x="9.4" y="9" width="4.4" height="4.2" fill="#c9c9c9" stroke="#8a8a8a" stroke-width=".7"/></svg>
<div class="t ui" id="tr2" style="left:88.5px;top:150.9px;color:#111;transform:scaleX(0.931)">getContentPane()</div>
<svg style="left:73px;top:170.0px" width="6" height="9" viewBox="0 0 6 9"><path d="M0.8 0.6L4.8 4.5L0.8 8.4" fill="none" stroke="#9a9a9a" stroke-width="1.2"/></svg>
<svg style="left:84px;top:167.5px" width="14" height="14" viewBox="0 0 14 14"><rect x="0.6" y="0.6" width="12.4" height="12.4" fill="#f3f8fd" stroke="#9a9a8a" stroke-width=".9"/></svg>
<div class="t ui" id="tr3" style="left:103.5px;top:167.9px;color:#111;transform:scaleX(0.897)">panel</div>
<svg style="left:73px;top:187.0px" width="6" height="9" viewBox="0 0 6 9"><path d="M0.8 0.6L4.8 4.5L0.8 8.4" fill="none" stroke="#9a9a9a" stroke-width="1.2"/></svg>
<svg style="left:84px;top:184.5px" width="14" height="14" viewBox="0 0 14 14"><rect x="0.6" y="0.6" width="12.4" height="12.4" fill="#f3f8fd" stroke="#9a9a8a" stroke-width=".9"/></svg>
<div class="t ui" id="tr4" style="left:103.6px;top:184.9px;color:#111;transform:scaleX(0.857)">panel_1</div>
<svg style="left:73px;top:204.0px" width="6" height="9" viewBox="0 0 6 9"><path d="M0.8 0.6L4.8 4.5L0.8 8.4" fill="none" stroke="#9a9a9a" stroke-width="1.2"/></svg>
<svg style="left:84px;top:201.5px" width="14" height="14" viewBox="0 0 14 14"><rect x="0.6" y="0.6" width="12.4" height="12.4" fill="#f3f8fd" stroke="#9a9a8a" stroke-width=".9"/></svg>
<div class="t ui" id="tr5" style="left:103.6px;top:201.9px;color:#111;transform:scaleX(0.882)">panel_2</div>
<svg style="left:73px;top:221.0px" width="6" height="9" viewBox="0 0 6 9"><path d="M0.8 0.6L4.8 4.5L0.8 8.4" fill="none" stroke="#9a9a9a" stroke-width="1.2"/></svg>
<svg style="left:84px;top:218.5px" width="14" height="14" viewBox="0 0 14 14"><rect x="0.6" y="0.6" width="12.4" height="12.4" fill="#f3f8fd" stroke="#9a9a8a" stroke-width=".9"/></svg>
<div class="t ui" id="tr6" style="left:103.6px;top:218.9px;color:#111;transform:scaleX(0.882)">panel_3</div>
<!-- Properties panel -->
<div class="a" style="left:34px;top:373px;width:246px;height:262px;background:#fff;border:1px solid #b4b4b4"></div>
<div class="a" style="left:35px;top:374px;width:244px;height:21.5px;background:#f0f0f0;border-bottom:1px solid #b4b4b4"></div>
<div class="a" style="left:263.5px;top:396px;width:15.5px;height:238px;background:#f0f0f0"></div>
<svg style="left:37px;top:378.5px" width="14" height="12" viewBox="0 0 14 12"><rect x="0.6" y="0.6" width="12.6" height="10.6" fill="#f7f9fc" stroke="#8c9ab0" stroke-width=".9"/><rect x="1" y="1" width="11.8" height="2.2" fill="#7c9fd2"/><path d="M1 5.6H13M1 8.2H13M5 3.2V11" stroke="#b7c3d6" stroke-width=".8"/></svg>
<div class="t ui" id="properties" style="left:54.5px;top:379.0px;color:#222;transform:scaleX(0.908)">Properties</div>
<svg style="left:209.5px;top:377px" width="15" height="15" viewBox="0 0 15 15"><path d="M0.8 0.8L6.4 6.4M3.4 0.6L7.6 4.8M0.6 3.4L4.8 7.6" stroke="#9a9a9a" stroke-width="1"/><circle cx="10" cy="9.8" r="3.6" fill="#f4f4f4" stroke="#8f8f8f" stroke-width="1.5"/><path d="M10 9.8H12.4" stroke="#8f8f8f" stroke-width="1.2" fill="none"/></svg>
<div class="a" style="left:229px;top:376.5px;width:2px;height:16.5px;background:#c2c2c2"></div>
<svg style="left:238.5px;top:377.5px" width="15" height="15" viewBox="0 0 15 15"><path d="M1 2.6H6M4.4 0.6L6.4 2.6L4.4 4.6M7.8 0.4V4.8M1 12.4H6M4.4 10.4L6.4 12.4L4.4 14.4M7.8 10.2V14.6" stroke="#4a5f80" stroke-width="1" fill="none"/><path d="M4 6H9.4V4.2L14 7.5L9.4 10.8V9H4Z" fill="#f7d26a" stroke="#c9962a" stroke-width=".8"/></svg>
<svg style="left:260px;top:378px" width="15" height="14" viewBox="0 0 15 14"><rect x="0.6" y="0.6" width="12.6" height="11" fill="#f6f6f6" stroke="#b9b9b9" stroke-width=".9"/><path d="M0.6 3.4H13.2M0.6 6.2H13.2M0.6 9H13.2M4.6 0.6V11.6M9 0.6V11.6" stroke="#c6c6c6" stroke-width=".8"/><path d="M8.6 7L13.6 10.4L11.4 10.8L12.6 13.2L11.4 13.6L10.4 11.4L8.8 12.8Z" fill="#f4f4f4" stroke="#9f9f9f" stroke-width=".7"/></svg>
<svg style="left:266px;top:402.5px" width="9" height="6" viewBox="0 0 9 6"><path d="M0.8 5L4.5 1.2L8.2 5" fill="none" stroke="#c4c4c4" stroke-width="1.3"/></svg>
<svg style="left:266px;top:622.5px" width="9" height="6" viewBox="0 0 9 6"><path d="M0.8 1L4.5 4.8L8.2 1" fill="none" stroke="#c4c4c4" stroke-width="1.3"/></svg>
<div class="t ui" id="noprops" style="left:108.5px;top:509.0px;color:#a3a3a3;transform:scaleX(0.919)">&lt;No Properties&gt;</div>
<!-- bottom tabs -->
<div class="a" style="left:32px;top:636.5px;width:1216px;height:19.5px;background:#f2f2f2"></div>
<div class="a" style="left:32px;top:655.5px;width:1216px;height:1px;background:#e2e2e2"></div>
<div class="a" style="left:92.5px;top:635.5px;width:59px;height:20.5px;background:#fff;border:1px solid #c9c9c9;border-top:none;border-radius:0 0 4px 4px"></div>
<svg style="left:37px;top:639px" width="14" height="14" viewBox="0 0 14 14"><rect x="0.6" y="0.6" width="12.2" height="12.4" rx="2" fill="#fbfcfd" stroke="#a9b7cc" stroke-width=".9"/><path d="M3 3.4H8" stroke="#3f8f5a" stroke-width="1.2"/><path d="M4.6 5.8H10" stroke="#2f5fae" stroke-width="1.2"/><path d="M4.6 8.2H8.6" stroke="#444" stroke-width="1.2"/><path d="M3 10.6H6.4" stroke="#d49a2a" stroke-width="1.2"/></svg>
<div class="t ui" id="srctab" style="left:54.1px;top:640.4px;color:#222;transform:scaleX(0.897)">Source</div>
<svg style="left:96.5px;top:639px" width="15" height="14" viewBox="0 0 15 14"><rect x="0.6" y="0.6" width="13.4" height="12.4" fill="#eef3fb" stroke="#7f93b6" stroke-width=".9"/><rect x="1" y="1" width="12.6" height="2.6" fill="#6f97d6"/><path d="M2.6 6.6H5M2.6 9.8H5" stroke="#6f97d6" stroke-width="1.2"/><rect x="6.4" y="5.4" width="5.6" height="2.4" fill="#dbe6f6" stroke="#6f97d6" stroke-width=".7"/><rect x="6.4" y="8.8" width="5.6" height="2.4" fill="#dbe6f6" stroke="#6f97d6" stroke-width=".7"/></svg>
<div class="t ui" id="dsntab" style="left:113.8px;top:640.4px;color:#222;transform:scaleX(0.915)">Design</div>
<!-- canvas -->
<div class="a" id="canvasview" style="left:300px;top:123px;width:945px;height:511px;background:#e4e4e4;overflow:hidden">
  <div class="a" style="left:0;top:0;width:14px;height:14px;background:#f1f1f1"></div>
  <div class="a" id="design" style="left:14px;top:14px;width:916px;height:482px;background:#330066;overflow:hidden">
    <svg style="left:0;top:0" width="916" height="482" viewBox="0 0 916 482">
      <rect x="22.3" y="-20" width="1000" height="76.7" fill="#000"/><rect x="24.2" y="-20" width="1000" height="74.9" fill="#f0f0f0"/>
      <rect x="22.3" y="67.4" width="638.7" height="314" fill="#000"/><rect x="24.2" y="69.25" width="634.7" height="310.35" fill="#f0f0f0"/>
      <rect x="687.9" y="67.4" width="240" height="314.35" fill="#fff"/>
      <rect x="22.3" y="402" width="1000" height="100" fill="#000"/><rect x="24.2" y="404" width="1000" height="100" fill="#f0f0f0"/>
      <rect x="197.25" y="104.00" width="123.25" height="30.00" fill="#fff" stroke="#adadad"/>
      <rect x="506.50" y="104.00" width="99.00" height="30.00" fill="#fff" stroke="#adadad"/>
      <rect x="197.25" y="166.60" width="123.25" height="29.80" fill="#fff" stroke="#adadad"/>
      <rect x="506.50" y="166.60" width="99.00" height="29.80" fill="#fff" stroke="#adadad"/>
      <rect x="197.25" y="241.00" width="123.25" height="29.10" fill="#fff" stroke="#adadad"/>
      <rect x="506.50" y="241.00" width="99.00" height="29.10" fill="#fff" stroke="#adadad"/>
      <rect x="197.25" y="304.00" width="123.25" height="29.10" fill="#fff" stroke="#adadad"/>
      <rect x="506.50" y="304.00" width="99.00" height="29.10" fill="#fff" stroke="#adadad"/>
      <rect x="85.75" y="424.60" width="145.85" height="70" fill="#e1e1e1" stroke="#b4b4b4"/>
      <rect x="284.70" y="424.60" width="145.80" height="70" fill="#e1e1e1" stroke="#b4b4b4"/>
      <rect x="482.25" y="424.60" width="145.65" height="70" fill="#e1e1e1" stroke="#b4b4b4"/>
      <rect x="808.50" y="424.60" width="146.00" height="70" fill="#e1e1e1" stroke="#b4b4b4"/>
    </svg>
    <div class="t tb" id="apptitle" style="left:419px;top:10px;font-size:23px;letter-spacing:-0.3px">STUDENTS RECORD MANAGEMENT SYSTEM</div>
    <div class="t tb lbl" id="l1" style="left:46.8px;top:115.0px;transform:scaleX(1.010)">Registration No.</div>
    <div class="t tb lbl" id="l2" style="left:47.0px;top:177.0px">Student Name</div>
    <div class="t tb lbl" id="l3" style="left:46.6px;top:251.0px;transform:scaleX(1.020)">Father Name</div>
    <div class="t tb lbl" id="l4" style="left:47.5px;top:313.5px">Class</div>
    <div class="t tb lbl" id="l5" style="left:383.5px;top:115.0px">Mobile No.</div>
    <div class="t tb lbl" id="l6" style="left:383.7px;top:177.0px;transform:scaleX(1.042)">Email</div>
    <div class="t tb lbl" id="l7" style="left:384.0px;top:251.0px;transform:scaleX(0.983)">City</div>
    <div class="t tb lbl" id="l8" style="left:383.6px;top:313.5px;transform:scaleX(1.043)">Date</div>
    <div class="t tb btx" id="b1" style="left:126.5px;top:452.0px">ENTER</div>
    <div class="t tb btx" id="b2" style="left:325.5px;top:452.0px;transform:scaleX(1.010)">CLEAR</div>
    <div class="t tb btx" id="b3" style="left:523.7px;top:452.0px;transform:scaleX(1.053)">PRINT</div>
    <div class="t tb btx" id="b4" style="left:855.3px;top:452.0px;transform:scaleX(1.053)">SAVE</div>
  </div>
  <svg style="left:0;top:0" width="945" height="20" viewBox="0 0 945 20"><rect x="37" y="13.4" width="893" height="1.1" fill="#ababab"/></svg>
  <div class="a" id="vscroll" style="left:930px;top:14px;width:15px;height:482px;background:#f0f0f0"></div>
  <svg style="left:930px;top:84px" width="15" height="346" viewBox="0 0 15 346"><rect x="1.3" y="1.2" width="13.7" height="343.4" fill="#656565"/></svg>
  <svg style="left:934px;top:20.5px" width="9" height="6" viewBox="0 0 9 6"><path d="M0.8 5L4.5 1.2L8.2 5" fill="none" stroke="#505050" stroke-width="1.4"/></svg>
  <svg style="left:934px;top:485px" width="9" height="6" viewBox="0 0 9 6"><path d="M0.8 1L4.5 4.8L8.2 1" fill="none" stroke="#505050" stroke-width="1.4"/></svg>
  <div class="a" id="hscroll" style="left:14px;top:496px;width:932px;height:16px;background:#f0f0f0"></div>
  <div class="a" style="left:55px;top:497.5px;width:640.5px;height:13px;background:#cdcdcd"></div>
  <svg style="left:18px;top:499.5px" width="6" height="9" viewBox="0 0 6 9"><path d="M5 0.8L1.2 4.5L5 8.2" fill="none" stroke="#505050" stroke-width="1.4"/></svg>
  <svg style="left:919.5px;top:499px" width="6" height="9" viewBox="0 0 6 9"><path d="M1 0.8L4.8 4.5L1 8.2" fill="none" stroke="#505050" stroke-width="1.4"/></svg>
</div>
<!-- right -->
<div class="a" style="left:1250px;top:67px;width:30px;height:54.5px;background:#f4f4f4;border:1px solid #e2e2e2;border-right:none;border-radius:0 0 0 8px"></div>
<svg style="left:1257px;top:73px" width="16" height="2" viewBox="0 0 16 2"><path d="M0 1H16" stroke="#8d8d8d" stroke-width="1.2" stroke-dasharray="2.2 2" fill="none"/></svg>
<svg style="left:1259.5px;top:82px" width="9" height="8" viewBox="0 0 9 8"><path d="M2.5 0.6H8.4V4.4H2.5Z" fill="#fff" stroke="#555" stroke-width="1.1"/><path d="M0.6 3H6V7.2H0.6Z" fill="#fff" stroke="#555" stroke-width="1.1"/></svg>
<svg style="left:1258px;top:100.5px" width="13" height="12" viewBox="0 0 13 12"><rect x="0.6" y="0.6" width="11.4" height="10.6" fill="#f4f9fd" stroke="#8f8f8f" stroke-width="1"/><rect x="1" y="1" width="10.6" height="2.2" fill="#6f9ad6"/></svg>
<div class="a" style="left:1250px;top:123.5px;width:30px;height:52.5px;background:#f4f4f4;border:1px solid #e2e2e2;border-right:none;border-radius:0 0 0 8px"></div>
<svg style="left:1257px;top:128px" width="16" height="2" viewBox="0 0 16 2"><path d="M0 1H16" stroke="#8d8d8d" stroke-width="1.2" stroke-dasharray="2.2 2" fill="none"/></svg>
<svg style="left:1259.5px;top:137.5px" width="9" height="8" viewBox="0 0 9 8"><path d="M2.5 0.6H8.4V4.4H2.5Z" fill="#fff" stroke="#555" stroke-width="1.1"/><path d="M0.6 3H6V7.2H0.6Z" fill="#fff" stroke="#555" stroke-width="1.1"/></svg>
<svg style="left:1257.5px;top:155px" width="14" height="15" viewBox="0 0 14 15"><rect x="0.8" y="0.8" width="4.8" height="4.8" fill="#cfe6fa" stroke="#3f8fd6" stroke-width="1.2"/><rect x="0.8" y="8.6" width="4.8" height="4.8" fill="#cfe6fa" stroke="#3f8fd6" stroke-width="1.2"/><path d="M7.4 3.2H12.6M7.4 11H12.6" stroke="#5aa0dc" stroke-width="1.2"/><rect x="7.4" y="6" width="2.4" height="2.2" fill="none" stroke="#2f5fae" stroke-width=".9"/><path d="M10.6 7.1H12.8" stroke="#2f5fae" stroke-width="1"/></svg>
<div class="a" style="left:1250px;top:178px;width:30px;height:112.5px;background:#f4f4f4;border:1px solid #e2e2e2;border-right:none;border-radius:0 0 0 8px"></div>
<svg style="left:1257px;top:183px" width="16" height="2" viewBox="0 0 16 2"><path d="M0 1H16" stroke="#8d8d8d" stroke-width="1.2" stroke-dasharray="2.2 2" fill="none"/></svg>
<svg style="left:1259.5px;top:193px" width="9" height="8" viewBox="0 0 9 8"><path d="M2.5 0.6H8.4V4.4H2.5Z" fill="#fff" stroke="#555" stroke-width="1.1"/><path d="M0.6 3H6V7.2H0.6Z" fill="#fff" stroke="#555" stroke-width="1.1"/></svg>
<svg style="left:1257px;top:210.5px" width="14" height="14" viewBox="0 0 14 14"><rect x="0.6" y="0.6" width="12.4" height="12.4" fill="#f2f5fa" stroke="#8c9ab5" stroke-width=".9"/><path d="M8 0.6V13M0.6 7H8" stroke="#8c9ab5" stroke-width=".8"/><circle cx="4.4" cy="3.8" r="2.4" fill="#d9332d"/><circle cx="4.4" cy="10" r="2.4" fill="#f2b63a"/><path d="M9.6 2.2Q12 4.6 9.8 7Q9.4 10 11.8 11.6" stroke="#6f86ad" stroke-width="1" fill="none"/></svg>
<div class="t" id="aticon" style="left:1258.6px;top:231.3px;font-family:'Liberation Serif',serif;font-style:italic;font-weight:bold;font-size:12.5px;color:#3474b8">@</div>
<svg style="left:1257px;top:251px" width="15" height="15" viewBox="0 0 15 15"><path d="M1 0.8H7.6L10.6 3.8V12.6H1Z" fill="#fdfaf0" stroke="#b89a4a" stroke-width=".9"/><rect x="4.6" y="4.6" width="3.4" height="5.6" rx="1" fill="#dfe9f6" stroke="#4f7bc0" stroke-width="1"/><path d="M6.6 10H10.6V8L14.4 11L10.6 14V12H6.6Z" fill="#f7d05a" stroke="#c29024" stroke-width=".7"/></svg>
<svg style="left:1258px;top:272.5px" width="13" height="13" viewBox="0 0 13 13"><rect x="0.8" y="0.8" width="11.4" height="8.6" rx="1.2" fill="#e8f0fb" stroke="#2f5aa5" stroke-width="1.5"/><path d="M3.4 4H8.6M3.4 6.2H9.8" stroke="#4b4b4b" stroke-width="1"/><rect x="5" y="9.6" width="3" height="1.6" fill="#2f5aa5"/><rect x="2.6" y="10.8" width="7.8" height="1.6" rx=".7" fill="#2f5aa5"/></svg>
<!-- status -->
<div class="a" style="left:0;top:655.5px;width:1248px;height:1px;background:#dcdcdc"></div>
<div class="a" style="left:623px;top:657px;width:1px;height:21px;background:#b5b5b5"></div>
<div class="a" style="left:749px;top:657px;width:1px;height:21px;background:#b5b5b5"></div>
<div class="a" style="left:868.5px;top:657px;width:1px;height:21px;background:#b5b5b5"></div>
<svg style="left:986.5px;top:661px" width="2" height="16" viewBox="0 0 2 16"><path d="M1 0V16" stroke="#b5b5b5" stroke-width="1.4" stroke-dasharray="1.6 2.6" fill="none"/></svg>
<svg style="left:1254.5px;top:661px" width="2" height="16" viewBox="0 0 2 16"><path d="M1 0V16" stroke="#b5b5b5" stroke-width="1.4" stroke-dasharray="1.6 2.6" fill="none"/></svg>
<div class="t ui" id="st1" style="left:630.1px;top:661.0px;color:#222;transform:scaleX(0.941)">Writable</div>
<div class="t ui" id="st2" style="left:755.0px;top:661.0px;color:#222;transform:scaleX(0.909)">Smart Insert</div>
<div class="t ui" id="st3" style="left:875.6px;top:661.0px;color:#222;transform:scaleX(0.847)">1 : 1 : 0</div>
<svg style="left:1264.5px;top:662.5px" width="9" height="15" viewBox="0 0 9 15"><path d="M4.5 0.8Q8.2 0.8 8.2 4.6Q8.2 6.6 6.6 8.2V10H2.4V8.2Q0.8 6.6 0.8 4.6Q0.8 0.8 4.5 0.8Z" fill="#fbe59a" stroke="#e9b949" stroke-width="1"/><rect x="2.6" y="10.4" width="3.8" height="3" rx=".8" fill="#5d6473"/></svg>
<!-- taskbar -->
<svg style="left:0;top:680px" width="1280" height="40" viewBox="0 0 1280 40"><rect x="0" y="1.4" width="1280" height="38.6" fill="#27343b"/><rect x="0" y="1.4" width="1280" height="1.4" fill="#222a33"/></svg>
<div class="a" style="left:0;top:718.5px;width:1280px;height:1.5px;background:#10181d"></div>
<div class="a" id="searchbox" style="left:45px;top:682px;width:322px;height:36.5px;background:#f2f2f2;border-top:1px solid #cfcfcf"></div>
<svg style="left:15px;top:692.5px" width="15" height="15" viewBox="0 0 15 15"><path d="M0 2.2L6.6 1.2V7H0ZM7.6 1.05L15 0V7H7.6ZM0 8H6.6V13.8L0 12.8ZM7.6 8H15V15L7.6 13.95Z" fill="#fff"/></svg>
<svg style="left:56px;top:692.5px" width="16" height="16" viewBox="0 0 16 16"><circle cx="10.4" cy="5.6" r="4.4" fill="none" stroke="#2b2b2b" stroke-width="1.4"/><path d="M7.2 8.8L1 15" stroke="#2b2b2b" stroke-width="1.5"/></svg>
<div class="t ui" id="searchtxt" style="left:83.0px;top:692.5px;font-size:15px;color:#3a3a3a;transform:scaleX(0.902)">Type here to search</div>
<!-- cortana -->
<svg style="left:382px;top:692px" width="16" height="16" viewBox="0 0 16 16"><circle cx="8" cy="8" r="6.2" fill="none" stroke="#fff" stroke-width="2"/></svg>
<!-- task view -->
<svg style="left:426px;top:693px" width="17" height="15" viewBox="0 0 17 15"><path d="M1 0.8H12M1 14.2H12" stroke="#fff" stroke-width="1.3"/><rect x="2" y="3.4" width="9" height="8" fill="none" stroke="#fff" stroke-width="1.3"/><path d="M14.8 0.6V3M14.8 6.6V14.4" stroke="#fff" stroke-width="1.4"/><circle cx="14.8" cy="4.8" r="1.2" fill="#fff"/></svg>
<!-- edge -->
<svg style="left:470px;top:688.5px" width="24" height="23" viewBox="0 0 24 23"><defs><linearGradient id="eg1" x1="0" y1="0" x2="1" y2="1"><stop offset="0" stop-color="#35c1f1"/><stop offset=".5" stop-color="#1b8fe0"/><stop offset="1" stop-color="#0c59a4"/></linearGradient><linearGradient id="eg2" x1="0" y1="0" x2="1" y2="0"><stop offset="0" stop-color="#2ab6e8"/><stop offset="1" stop-color="#6fd64b"/></linearGradient></defs><circle cx="12" cy="11.5" r="11" fill="url(#eg1)"/><path d="M1.2 10A11 11 0 0 1 23 10.5Q23 15 18.6 15Q14.5 15 14.2 12.4Q16 9.6 12.2 8Q7 6.6 1.2 10Z" fill="url(#eg2)"/><path d="M8.6 12.6Q8.2 17.6 13.6 20.4Q8 21.6 5.4 17Q4.4 13.6 8.6 12.6Z" fill="#0b4f9a"/><path d="M9 13Q9.4 9.6 13.4 9.8Q16.4 10 17.6 12.4Q19.4 15.4 23.2 13.6L22.4 16.6Q17 18.4 12.6 16.8Q9 15.6 9 13Z" fill="#27343b"/></svg>
<!-- explorer -->
<svg style="left:515.5px;top:691.2px" width="21.5" height="17.8" viewBox="0 0 23 19"><path d="M0.6 1.6Q0.6 0.6 1.6 0.6H8L10 2.8H21.4Q22.4 2.8 22.4 3.8V17.4H0.6Z" fill="#f3b93a"/><rect x="0.6" y="5" width="21.8" height="13" rx="1" fill="#fbd768"/><rect x="6.6" y="11" width="10" height="7" fill="#3f8fdc"/><rect x="8.8" y="13.6" width="5.6" height="4.4" fill="#fbd768"/></svg>
<!-- store -->
<svg style="left:560px;top:688.5px" width="23" height="23" viewBox="0 0 23 23"><path d="M7.4 6V4Q7.4 1 11.5 1Q15.6 1 15.6 4V6" fill="none" stroke="#f2f2f2" stroke-width="1.5"/><path d="M0.8 6H22.2V20.6Q22.2 22.2 20.6 22.2H2.4Q0.8 22.2 0.8 20.6Z" fill="#f4f4f4"/><rect x="7" y="9.4" width="4" height="4" fill="#f25022"/><rect x="12" y="9.4" width="4" height="4" fill="#7fba00"/><rect x="7" y="14.4" width="4" height="4" fill="#00a4ef"/><rect x="12" y="14.4" width="4" height="4" fill="#ffb900"/></svg>
<!-- mail -->
<svg style="left:604.5px;top:689.5px" width="25" height="22" viewBox="0 0 25 22"><path d="M0.6 8L12.5 0.6L24.4 8V21H0.6Z" fill="#1279c9"/><path d="M0.6 8.6H24.4V21H0.6Z" fill="#2aa4ec"/><path d="M2 9.4H23L12.5 16.6Z" fill="#f4f8fc"/></svg>
<!-- word -->
<svg style="left:650px;top:690px" width="23" height="20" viewBox="0 0 23 20"><rect x="9" y="1.4" width="13" height="17" fill="#f4f6fa" stroke="#c9d3e4" stroke-width=".6"/><path d="M14 5H20.6M14 8H20.6M14 11H20.6M14 14H20.6" stroke="#4a76c0" stroke-width="1.1"/><path d="M0.4 2L13 0.2V19.8L0.4 18Z" fill="#2b5cad"/></svg>
<div class="t" id="wordw" style="left:652.6px;top:694.6px;font-family:'Liberation Sans',sans-serif;font-weight:bold;font-size:10.5px;color:#fff">W</div>
<!-- eclipse (active) -->
<div class="a" style="left:685px;top:682px;width:44px;height:36.5px;background:#545f64"></div>
<div class="a" style="left:685px;top:717px;width:44px;height:2px;background:#8db5e6"></div>
<svg style="left:694px;top:688px" width="25" height="24" viewBox="0 0 25 24"><circle cx="11.4" cy="12" r="11" fill="#f7941e"/><circle cx="13.6" cy="12" r="10.6" fill="#27343b"/><circle cx="14" cy="12" r="9.8" fill="#2c2255"/><rect x="4" y="8.2" width="20" height="1.6" fill="#e7e3f1"/><rect x="3.8" y="11.2" width="20.6" height="1.6" fill="#e7e3f1"/><rect x="4" y="14.2" width="20" height="1.6" fill="#e7e3f1"/></svg>
<!-- notepad-ish -->
<svg style="left:739px;top:689px" width="24" height="22" viewBox="0 0 24 22"><path d="M7.4 1L21.8 3.4L17 20.6L1.4 17.4Z" fill="#7fd4d8"/><path d="M7.4 1L21.8 3.4L20.6 7L6.6 4Z" fill="#b8ecee"/><path d="M8 5.4L19.8 8.2L17 20.6L4 17.8Z" fill="#4fb9c3" opacity=".55"/><path d="M20.6 6L22.6 17.4L17 20.6Z" fill="#caa25c"/></svg>
<!-- cmd -->
<svg style="left:783.5px;top:690.5px" width="23" height="19" viewBox="0 0 23 19"><rect x="0.6" y="0.6" width="21.6" height="17.6" rx="1" fill="#0b0b0b" stroke="#8f9499" stroke-width="1.1"/><rect x="1.2" y="1.2" width="20.4" height="2.6" fill="#c9ccd0"/><path d="M3.4 8.2H9M10.6 10H16" stroke="#e8e8e8" stroke-width="1.3"/></svg>
<!-- mysql workbench -->
<svg style="left:828px;top:688.5px" width="23" height="23" viewBox="0 0 23 23"><rect x="0.4" y="0.4" width="22.2" height="22.2" rx="2.6" fill="#28567c"/><path d="M3.6 6Q7.6 4.6 10.6 8.6Q13.8 12.6 17.8 17.6L15.6 17.2L16.4 20L13.4 16.4Q9 14.6 7 10.2Q6.4 7.8 3.6 6Z" fill="none" stroke="#e9f1f8" stroke-width="1.1"/><path d="M15.4 2.6L19.6 6.8M17.6 2L20.4 4.8" stroke="#dfe9f2" stroke-width="1.4"/></svg>
<!-- IDM -->
<svg style="left:871.5px;top:688.5px" width="24" height="23" viewBox="0 0 24 23"><circle cx="14.4" cy="7.6" r="6.8" fill="#3f86d8"/><path d="M9.6 4.4Q12.6 1.6 15.6 3.4Q15.4 6 12.6 6.8Q10.4 7.4 9.6 4.4ZM16.6 8.6Q19.6 8 20.4 10.4Q19 12.6 17 12.2Z" fill="#b8d86a"/><path d="M2.4 7.6Q2.6 15.6 12.4 15.2" fill="none" stroke="#5ea93a" stroke-width="2.4"/><path d="M1.4 10.6Q3.6 17.6 12.6 17" fill="none" stroke="#f2c22e" stroke-width="2.2"/><path d="M2 13.6Q5.6 19.8 13 18.8" fill="none" stroke="#e9782b" stroke-width="1.8"/><path d="M3.6 16.4Q7.4 21.2 13.6 20.4" fill="none" stroke="#3f6fc8" stroke-width="1.6"/><path d="M9.6 12.6L22.8 14.4L12.6 21.8L13.4 17.4Z" fill="#2fae3c" stroke="#1f8a2e" stroke-width=".6"/></svg>
<!-- chrome -->
<svg style="left:916px;top:688.5px" width="23" height="23" viewBox="0 0 23 23"><circle cx="11.5" cy="11.5" r="11" fill="#db4437"/><path d="M11.5 11.5L1.97 6A11 11 0 0 0 8.6 22.1Z" fill="#0f9d58"/><path d="M11.5 11.5L8.6 22.1A11 11 0 0 0 21.9 7.8H12Z" fill="#ffcd40"/><path d="M2 6A11 11 0 0 1 21.9 7.8H11.5Z" fill="#db4437"/><circle cx="11.5" cy="11.5" r="5" fill="#f1f1f1"/><circle cx="11.5" cy="11.5" r="3.9" fill="#4285f4"/></svg>
<!-- vlc -->
<svg style="left:962.5px;top:689.5px" width="19" height="22" viewBox="0 0 19 22"><path d="M7.9 1Q9.5 -0.2 11.1 1L15.6 16H3.4Z" fill="#f48b1b"/><path d="M7 4H12L12.9 7H6.1Z" fill="#f6f1ea"/><path d="M5.3 9.6H13.7L14.7 13H4.3Z" fill="#f6f1ea"/><path d="M1.8 15.4H17.2L18.6 21.2H0.4Z" fill="#f07e12"/><path d="M3 16H16L16.4 17.8H2.6Z" fill="#f9a94a"/></svg>
<!-- tray -->
<svg style="left:1001.5px;top:695.5px" width="12" height="8" viewBox="0 0 12 8"><path d="M0.8 7L6 1.4L11.2 7" fill="none" stroke="#f1f1f1" stroke-width="1.4"/></svg>
<svg style="left:1021.5px;top:692.5px" width="17" height="12" viewBox="0 0 17 12"><path d="M4 11.4Q0.6 11.4 0.6 8.4Q0.8 5.8 3.6 5.6Q4.6 1.6 8.4 2Q10.6 2.2 11.6 4.4Q16.4 4 16.4 8Q16.4 11.4 13 11.4Z" fill="#e6e8ea"/></svg>
<svg style="left:1046.5px;top:691.5px" width="11" height="17" viewBox="0 0 11 17"><rect x="3" y="0.4" width="5" height="10" rx="2.5" fill="#f1f1f1"/><path d="M0.8 7.4Q0.8 12 5.5 12Q10.2 12 10.2 7.4M5.5 12V15.4M3 15.8H8" fill="none" stroke="#f1f1f1" stroke-width="1.1"/></svg>
<svg style="left:1069.5px;top:693px" width="13" height="14" viewBox="0 0 13 14"><path d="M1 12.4Q1.4 2 12.4 1.4" fill="none" stroke="#e8e8e8" stroke-width="1.1"/><path d="M4.4 12.6Q4.8 5.6 12.4 5" fill="none" stroke="#e8e8e8" stroke-width="1.1"/><path d="M7.8 12.8Q8 8.8 12.4 8.6" fill="none" stroke="#e8e8e8" stroke-width="1.1"/><circle cx="11.2" cy="12" r="1.5" fill="#f4f4f4"/></svg>
<svg style="left:1088.5px;top:693px" width="17" height="13" viewBox="0 0 17 13"><rect x="4" y="3.4" width="11" height="7" fill="none" stroke="#f1f1f1" stroke-width="1.1"/><rect x="15.4" y="5.6" width="1.2" height="2.6" fill="#f1f1f1"/><rect x="5.4" y="4.8" width="6" height="4.2" fill="#f1f1f1"/><path d="M2.4 0.6V3M4.4 0.6V3M1 3H5.8V5Q5.8 6.6 3.4 6.6Q1 6.6 1 5ZM3.4 6.6V9" stroke="#f1f1f1" stroke-width="1" fill="#27343b"/></svg>
<svg style="left:1111px;top:693px" width="17" height="14" viewBox="0 0 17 14"><path d="M0.8 4.8H3.6L7.4 1.4V12.6L3.6 9.2H0.8Z" fill="none" stroke="#f1f1f1" stroke-width="1.1"/><path d="M9.6 4.6Q11 7 9.6 9.4M11.8 3Q14 7 11.8 11" fill="none" stroke="#f1f1f1" stroke-width="1"/><path d="M14 1.6Q16.8 7 14 12.4" fill="none" stroke="#8d959a" stroke-width="1"/></svg>
<div class="t ui" id="eng" style="left:1135.6px;top:694.7px;color:#f3f3f3;transform:scaleX(0.873)">ENG</div>
<div class="t ui" id="clock" style="left:1184.0px;top:686.0px;color:#f3f3f3;transform:scaleX(0.864)">21:38</div>
<div class="t ui" id="date" style="left:1170.6px;top:702.5px;color:#f3f3f3;transform:scaleX(0.895)">25/01/2021</div>
<svg style="left:1241.5px;top:692px" width="17" height="16" viewBox="0 0 17 16"><path d="M0.6 0.6H14.8V11.6H7.6L4.4 14.8V11.6H0.6Z" fill="#f4f4f4"/><path d="M3 3.6H12.4M3 6H12.4M3 8.4H9" stroke="#27343b" stroke-width="1.1"/><circle cx="13.4" cy="11.6" r="3.1" fill="#27343b" stroke="#f4f4f4" stroke-width="1"/><path d="M12.2 12.6Q14.6 12.6 14.4 10.4" stroke="#f4f4f4" stroke-width=".9" fill="none"/></svg>
<!-- cursor -->
<svg id="cursor" style="left:1245px;top:445.5px" width="13" height="19" viewBox="0 0 13 19"><path d="M0.6 0.8V15.4L4 12.2L6.6 18L9 17L6.4 11.4H11.4Z" fill="#fff" stroke="#111" stroke-width="1" stroke-linejoin="miter"/></svg>
</body>
</html>
